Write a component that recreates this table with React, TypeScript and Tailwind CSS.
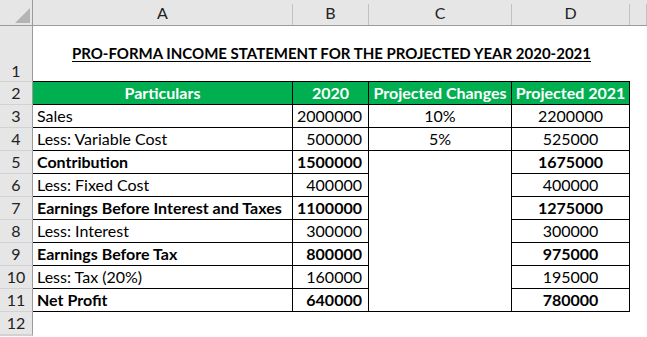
import React from 'react';

type Row = {
  n: number;
  label: string;
  b: string;
  d: string;
  bold?: boolean;
  c?: string;
};

const rows: Row[] = [
  { n: 3, label: 'Sales', b: '2000000', c: '10%', d: '2200000' },
  { n: 4, label: 'Less: Variable Cost', b: '500000', c: '5%', d: '525000' },
  { n: 5, label: 'Contribution', b: '1500000', d: '1675000', bold: true },
  { n: 6, label: 'Less: Fixed Cost', b: '400000', d: '400000' },
  { n: 7, label: 'Earnings Before Interest and Taxes', b: '1100000', d: '1275000', bold: true },
  { n: 8, label: 'Less: Interest', b: '300000', d: '300000' },
  { n: 9, label: 'Earnings Before Tax', b: '800000', d: '975000', bold: true },
  { n: 10, label: 'Less: Tax (20%)', b: '160000', d: '195000' },
  { n: 11, label: 'Net Profit', b: '640000', d: '780000', bold: true },
];

const RowNum = ({ n, tall }: { n?: number; tall?: boolean }) => (
  <div
    className={`flex justify-center bg-[#e6e6e6] border-r border-b border-r-[#9b9b9b] border-b-[#d2d2d2] text-[#222] ${
      tall ? 'items-end pb-[2px]' : 'items-center'
    }`}
  >
    {n}
  </div>
);

const ColHead = ({ letter }: { letter: string }) => (
  <div className="flex bg-[#e6e6e6] border-b border-[#9b9b9b]">
    <div className="flex-1 flex items-center justify-center text-[#222]">{letter}</div>
    <div className="w-px mt-1 bg-[#c2c2c2]" />
  </div>
);

const cell = 'flex items-center border-r border-b border-black px-[4px] whitespace-nowrap';

export default function App() {
  return (
    <div
      className="w-[647px] h-[337px] overflow-hidden bg-white text-[16px] text-black leading-none"
      style={{ fontFamily: 'Lato, "Liberation Sans", sans-serif' }}
    >
      <div className="grid grid-cols-[33px_260px_76px_143px_118px_17px] grid-rows-[26px_56px_repeat(11,23px)]">
        {/* column headers */}
        <div className="relative bg-[#e6e6e6] border-r border-b border-[#9b9b9b]">
          <svg className="absolute left-[15px] top-[8px]" width="16" height="16" viewBox="0 0 16 16">
            <polygon points="15,0 15,15 0,15" fill="#b4b4b4" />
          </svg>
        </div>
        <ColHead letter="A" />
        <ColHead letter="B" />
        <ColHead letter="C" />
        <ColHead letter="D" />
        <ColHead letter="" />

        {/* row 1: title */}
        <RowNum n={1} tall />
        <div className="col-span-4 flex items-center justify-center border-b border-black">
          <span className="text-[15px] font-bold underline underline-offset-2">
            PRO-FORMA INCOME STATEMENT FOR THE PROJECTED YEAR 2020-2021
          </span>
        </div>
        <div />

        {/* row 2: header */}
        <RowNum n={2} />
        <div className={`${cell} justify-center bg-[#00b050] text-white font-bold`}>Particulars</div>
        <div className={`${cell} justify-center bg-[#00b050] text-white font-bold`}>2020</div>
        <div className={`${cell} justify-center bg-[#00b050] text-white font-bold`}>Projected Changes</div>
        <div className={`${cell} justify-center bg-[#00b050] text-white font-bold`}>Projected 2021</div>
        <div />

        {rows.map((r) => (
          <React.Fragment key={r.n}>
            <RowNum n={r.n} />
            <div className={`${cell} ${r.bold ? 'font-bold' : ''}`}>{r.label}</div>
            <div className={`${cell} justify-end pr-[6px] ${r.bold ? 'font-bold' : ''}`}>{r.b}</div>
            {r.n <= 4 && <div className={`${cell} justify-center`}>{r.c}</div>}
            {r.n === 5 && <div className={`${cell} row-span-7`} />}
            <div className={`${cell} justify-center ${r.bold ? 'font-bold' : ''}`}>{r.d}</div>
            <div />
          </React.Fragment>
        ))}

        <RowNum n={12} />
        <div className="col-span-5" />
        <RowNum />
        <div className="col-span-5" />
      </div>
    </div>
  );
}
